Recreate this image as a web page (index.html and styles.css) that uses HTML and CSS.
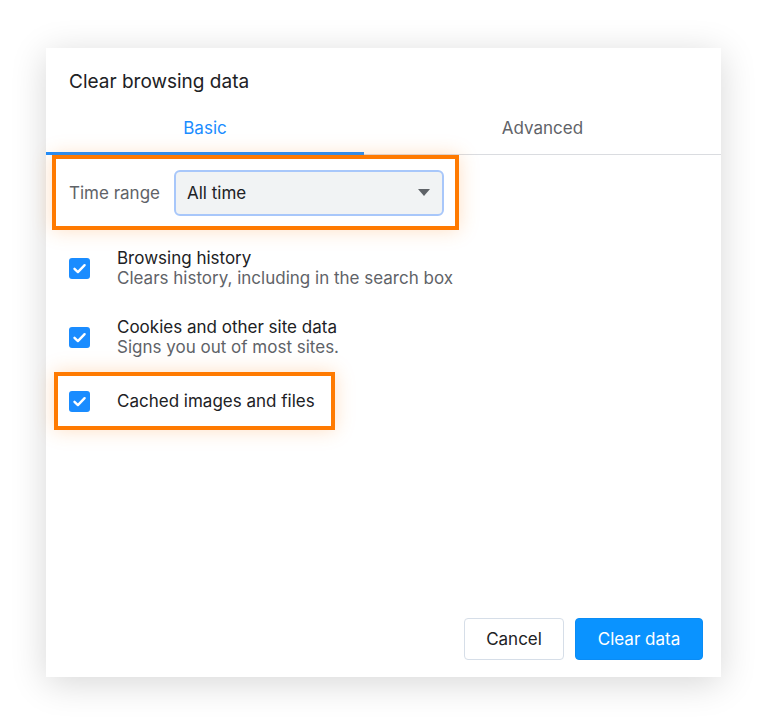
FILE: index.html
```html
<!DOCTYPE html>
<html lang="en">
<head>
<meta charset="utf-8">
<title>Clear browsing data</title>
<link rel="stylesheet" href="styles.css">
</head>
<body>
<div class="dialog">
  <div class="title">Clear browsing data</div>
  <div class="tabs">
    <div class="tab tab-active">Basic</div>
    <div class="tab">Advanced</div>
  </div>
  <div class="content">
    <div class="range-row highlight">
      <span class="range-label">Time range</span>
      <div class="select">
        <span>All time</span>
        <svg class="caret" width="12" height="7" viewBox="0 0 12 7"><path d="M0 0H12L6 7Z" fill="#5f6368"/></svg>
      </div>
    </div>
    <div class="item item-first">
      <span class="checkbox"><svg width="21" height="21" viewBox="0 0 21 21"><path d="M5.5 10.8L8.9 14.1L15.6 7.2" fill="none" stroke="#fff" stroke-width="2.4" stroke-linecap="round" stroke-linejoin="round"/></svg></span>
      <div class="item-text">
        <div class="item-title">Browsing history</div>
        <div class="item-sub">Clears history, including in the search box</div>
      </div>
    </div>
    <div class="item">
      <span class="checkbox"><svg width="21" height="21" viewBox="0 0 21 21"><path d="M5.5 10.8L8.9 14.1L15.6 7.2" fill="none" stroke="#fff" stroke-width="2.4" stroke-linecap="round" stroke-linejoin="round"/></svg></span>
      <div class="item-text">
        <div class="item-title">Cookies and other site data</div>
        <div class="item-sub">Signs you out of most sites.</div>
      </div>
    </div>
    <div class="item item-cached highlight">
      <span class="checkbox"><svg width="21" height="21" viewBox="0 0 21 21"><path d="M5.5 10.8L8.9 14.1L15.6 7.2" fill="none" stroke="#fff" stroke-width="2.4" stroke-linecap="round" stroke-linejoin="round"/></svg></span>
      <div class="item-text">
        <div class="item-title">Cached images and files</div>
      </div>
    </div>
  </div>
  <div class="footer">
    <button class="btn btn-cancel">Cancel</button>
    <button class="btn btn-primary">Clear data</button>
  </div>
</div>
</body>
</html>
```
FILE: styles.css
```css
html, body {
  margin: 0;
  padding: 0;
  background: #ffffff;
}
body {
  font-family: "Inter", "Liberation Sans", sans-serif;
  color: #202124;
  width: 766px;
  height: 725px;
  overflow: hidden;
}
.dialog {
  margin: 48px 0 0 46px;
  width: 675px;
  height: 629px;
  background: #fff;
  box-shadow: 0 6px 34px rgba(0, 0, 0, 0.16);
  display: flex;
  flex-direction: column;
}
.title {
  font-size: 19px;
  line-height: 24px;
  padding: 22px 0 0 23px;
  height: 31px;
}
.tabs {
  display: flex;
  border-bottom: 1px solid #dadce0;
}
.tab {
  font-size: 17px;
  line-height: 20px;
  height: 54px;
  box-sizing: border-box;
  padding-top: 17px;
  text-align: center;
  color: #5f6368;
  flex: 1;
  border-bottom: 3px solid transparent;
  margin-bottom: -1px;
}
.tab-active {
  flex: 0 0 318px;
  color: #1a8cff;
  border-bottom-color: #1a8cff;
}
.content {
  display: flex;
  flex-direction: column;
}
.highlight {
  border: 4px solid #ff7a00;
  box-shadow: 0 0 18px rgba(255, 140, 40, 0.28);
  background: #fff;
}
.range-row {
  margin-left: 6px;
  width: 407px;
  height: 75px;
  box-sizing: border-box;
  display: flex;
  align-items: center;
  padding-left: 13px;
  gap: 16px;
}
.range-label {
  font-size: 17px;
  color: #5f6368;
  width: 89px;
  white-space: nowrap;
}
.select {
  width: 270px;
  height: 46px;
  box-sizing: border-box;
  border: 2px solid #a8c7fa;
  border-radius: 6px;
  background: #f1f3f4;
  display: flex;
  align-items: center;
  justify-content: space-between;
  padding: 0 12px 0 11px;
  font-size: 17px;
  color: #202124;
}
.caret {
  display: block;
}
.item {
  display: flex;
  align-items: center;
  padding-left: 23px;
  gap: 27px;
}
.item-first {
  margin-top: 18px;
  margin-bottom: 29px;
}
.item-cached {
  margin-top: 15px;
  margin-left: 8px;
  padding-left: 11px;
  padding-right: 16px;
  height: 58px;
  box-sizing: border-box;
  align-self: flex-start;
}
.checkbox {
  width: 21px;
  height: 21px;
  border-radius: 3px;
  background: #1a8cff;
  flex: 0 0 21px;
  display: block;
}
.checkbox svg {
  display: block;
}
.item-title {
  font-size: 17px;
  line-height: 20px;
  color: #202124;
}
.item-sub {
  font-size: 17px;
  line-height: 20px;
  color: #5f6368;
}
.footer {
  margin-top: auto;
  display: flex;
  justify-content: flex-end;
  gap: 11px;
  padding: 0 18px 17px 0;
}
.btn {
  font-family: "Inter", "Liberation Sans", sans-serif;
  font-size: 17px;
  height: 42px;
  border-radius: 4px;
  cursor: pointer;
}
.btn-cancel {
  width: 100px;
  background: #fff;
  border: 1px solid #d6dee8;
  color: #202124;
}
.btn-primary {
  width: 128px;
  background: #0a93ff;
  border: 1px solid #0a8cf5;
  color: #fff;
}
```
